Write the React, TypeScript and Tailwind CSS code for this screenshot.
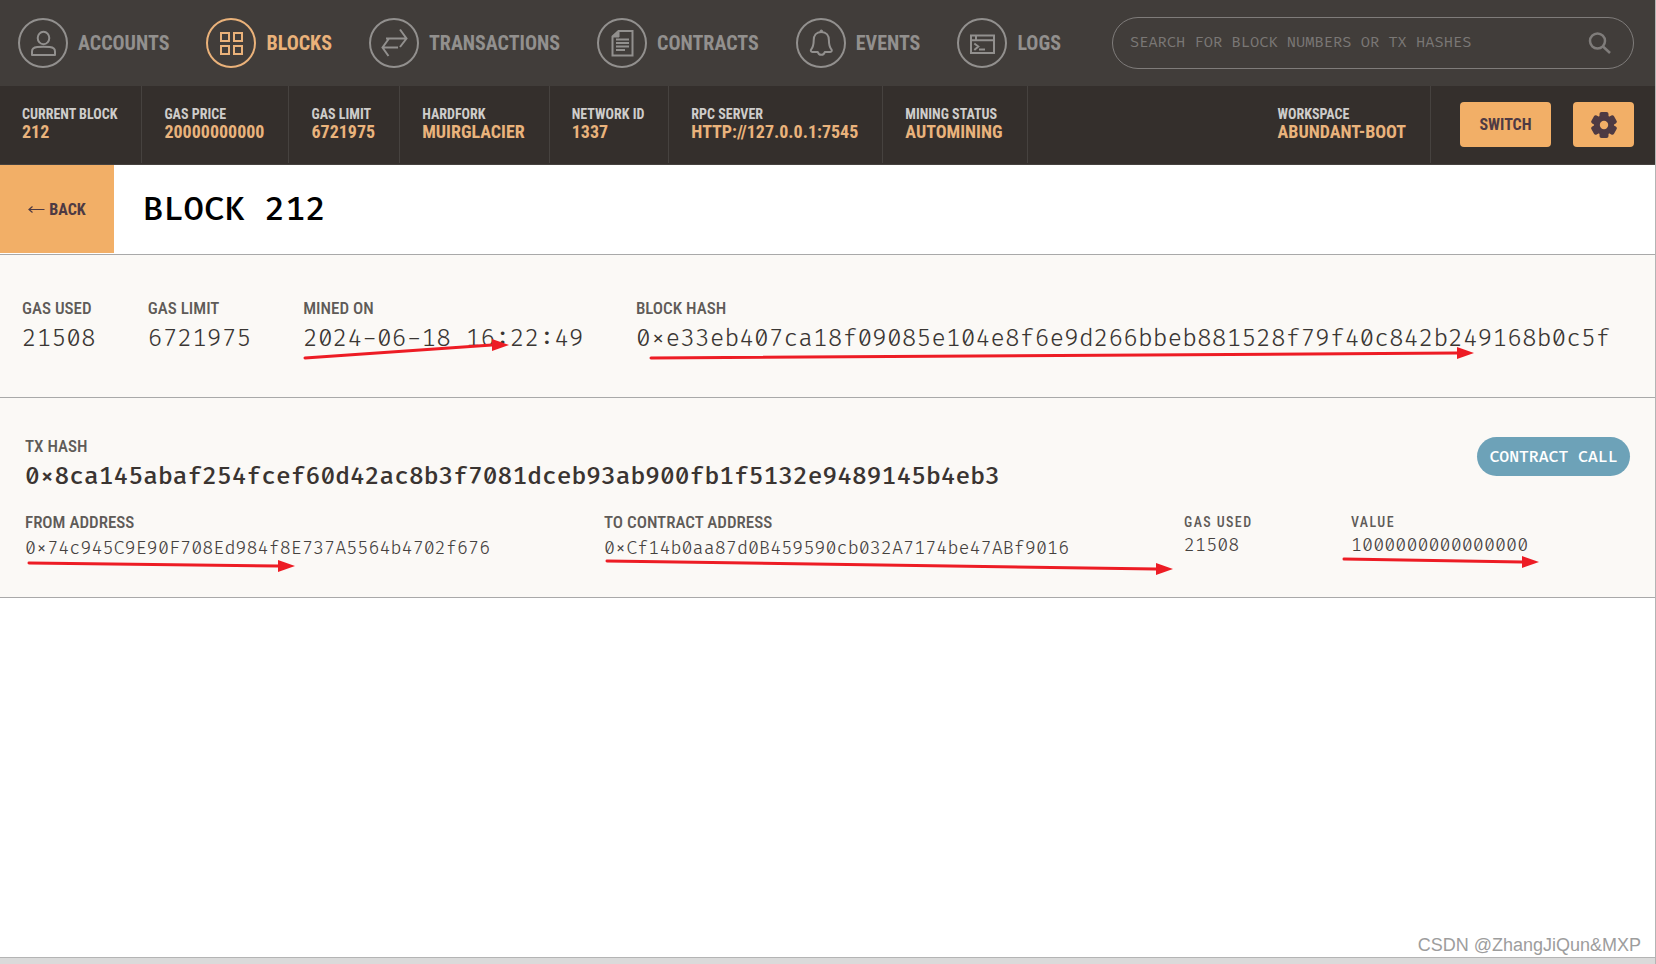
import React, { ReactNode } from "react";
import clsx from "clsx";

const sans = "font-['Roboto_Condensed','Liberation_Sans_Narrow',Roboto,sans-serif]";
const mono = "font-['Fira_Code','Fira_Mono','Noto_Sans_Mono','DejaVu_Sans_Mono',monospace]";
const fieldLabel = "text-[17px] leading-6 font-medium text-[#5f5b58]";

function TabIcon({ children }: { children: ReactNode }) {
  return (
    <svg viewBox="2 2 46 46" className="size-full" fill="none" stroke="currentColor" strokeWidth="2">
      {children}
    </svg>
  );
}

const tabs: { label: string; icon: ReactNode; active?: boolean }[] = [
  {
    label: "ACCOUNTS",
    icon: (
      <>
        <ellipse cx="25.5" cy="20" rx="5.8" ry="6.2" />
        <path d="M14 37v-3.500c0-3 2-4 5.200-4.400 4-.5 8.600-.5 12.600 0 3.200.4 5.200 1.400 5.200 4.400V37z" strokeLinejoin="round" />
      </>
    ),
  },
  {
    label: "BLOCKS",
    active: true,
    icon: <path d="M15 15h8v8h-8zM28 15h8v8h-8zM15 28h8v8h-8zM28 28h8v8h-8z" />,
  },
  {
    label: "TRANSACTIONS",
    icon: <path d="M17 20.500h20.500M31 11.500l6.500 9-6.500 8.500M29 29.500H13.500M20 20.500l-6.500 9 6 8.500" />,
  },
  {
    label: "CONTRACTS",
    icon: (
      <>
        <path d="M21.500 13H35.500v24.500H15.500V18.500z" />
        <path d="M15.500 19l6.500-6.500V19z" fill="currentColor" strokeWidth="1" />
        <path d="M19 21.500h13M19 25h13M19 28.500h13M19 32h9" strokeWidth="1.800" />
      </>
    ),
  },
  {
    label: "EVENTS",
    icon: (
      <>
        <path
          d="M25.300 14c-5.200 0-7.600 3.600-7.600 8.200 0 5.600-.9 7.200-2.500 9.300-.9 1.100-.3 2.400 1.200 2.400h5.400c.5 2 1.600 2.900 3.500 2.900s3-.9 3.500-2.900h5.400c1.500 0 2.100-1.300 1.200-2.400-1.600-2.100-2.500-3.700-2.500-9.300 0-4.600-2.400-8.200-7.600-8.200z"
          strokeLinejoin="round"
        />
        <circle cx="25.3" cy="13.3" r="1.300" fill="currentColor" strokeWidth="1" />
      </>
    ),
  },
  {
    label: "LOGS",
    icon: <path d="M14 17.500h23V35H14zM14 22.300h23M19 17.500v4.800M17.300 25.500l4 3-4 3.500M22 31.500h6" />,
  },
];

const status = [
  ["CURRENT BLOCK", "212"],
  ["GAS PRICE", "20000000000"],
  ["GAS LIMIT", "6721975"],
  ["HARDFORK", "MUIRGLACIER"],
  ["NETWORK ID", "1337"],
  ["RPC SERVER", "HTTP://127.0.0.1:7545"],
  ["MINING STATUS", "AUTOMINING"],
];

const gearTeeth = [0, 60, 120];

function StatusItem({ label, value }: { label: string; value: string }) {
  return (
    <div className="flex h-[77px] flex-col border-r border-[#46423f] pt-5 pr-6 pl-[22px] font-bold whitespace-nowrap">
      <span className="text-[14px] leading-4 text-[#cfcdcb]">{label}</span>
      <span className="text-[18px] leading-5 text-[#e9b37c]">{value}</span>
    </div>
  );
}

function Arrow({ x, y, length, rise }: { x: number; y: number; length: number; rise: number }) {
  const base = length - 17;
  return (
    <svg className="pointer-events-none absolute top-0 left-0 size-px overflow-visible" aria-hidden="true">
      <g transform={`translate(${x} ${y})`} fill="#ed1c24" stroke="#ed1c24">
        <path d={`M0 0L${base} ${-rise}`} strokeWidth="3" strokeLinecap="round" />
        <path d={`M${base} ${-rise - 6}L${length} ${-rise}L${base} ${-rise + 6}Z`} stroke="none" />
      </g>
    </svg>
  );
}

function Summary({ label, value, children }: { label: string; value: string; children?: ReactNode }) {
  return (
    <div className="relative whitespace-nowrap">
      <dt className={fieldLabel}>{label}</dt>
      <dd className={clsx(mono, "text-[24px] leading-[38px] font-light text-[#3a3633]")}>{value}</dd>
      {children}
    </div>
  );
}

function Address({ label, value, children }: { label: string; value: string; children: ReactNode }) {
  return (
    <div className="relative">
      <dt className={fieldLabel}>{label}</dt>
      <dd className={clsx(mono, "text-[18px] leading-[30px] font-light text-[#45413e]")}>{value}</dd>
      {children}
    </div>
  );
}

function Amount({ label, value, children }: { label: string; value: string; children?: ReactNode }) {
  return (
    <div className="relative">
      <dt className="text-[14px] leading-6 font-medium tracking-widest text-[#5f5b58]">{label}</dt>
      <dd className={clsx(mono, "text-[18px] leading-6 font-light text-[#45413e]")}>{value}</dd>
      {children}
    </div>
  );
}

export default function App() {
  return (
    <div className={clsx(sans, "flex min-h-screen flex-col border-r border-[#b4b4b4] bg-white")}>
      <header>
        <nav className="flex h-[86px] items-center bg-[#413d3a] pr-[21px] pl-[18px]">
          <div className="flex gap-[37px]">
            {tabs.map((t) => (
              <a
                key={t.label}
                href="#"
                className={clsx("flex items-center gap-[10px] text-[20px] font-bold", t.active ? "text-[#eab27a]" : "text-[#92908e]")}
              >
                <span className="size-[50px] rounded-full border-2 border-current">
                  <TabIcon>{t.icon}</TabIcon>
                </span>
                {t.label}
              </a>
            ))}
          </div>
          <label className="ml-[51px] flex h-[52px] grow items-center rounded-full border border-[#7f7c7a] pr-[22px] pl-[17px]">
            <input
              aria-label="Search"
              placeholder="SEARCH FOR BLOCK NUMBERS OR TX HASHES"
              className={clsx(mono, "min-w-0 grow bg-transparent pt-px text-[15px] outline-none placeholder:text-[#7a7775]")}
            />
            <svg viewBox="0 0 24 24" className="size-6" fill="none" stroke="#7f7c7a" strokeWidth="2.500">
              <circle cx="10.500" cy="10" r="7.500" />
              <path d="M16 15.500l7 6.500" />
            </svg>
          </label>
        </nav>
        <div className="flex h-[79px] border-b border-[#46423f] bg-[#342f2c]">
          {status.map(([l, v]) => (
            <StatusItem key={l} label={l} value={v} />
          ))}
          <div className="ml-auto">
            <StatusItem label="WORKSPACE" value="ABUNDANT-BOOT" />
          </div>
          <div className="flex items-start gap-[22px] pt-4 pr-[21px] pl-[29px]">
            <button className="h-[45px] w-[91px] rounded bg-[#f2af67] text-[16px] font-bold text-[#4e3a43]">SWITCH</button>
            <button aria-label="Settings" className="flex h-[45px] w-[61px] items-center justify-center rounded bg-[#f2af67]">
              <svg viewBox="-13 -13 26 26" className="size-[26px]" fill="#4e3a43">
                <circle r="10" />
                {gearTeeth.map((a) => (
                  <rect key={a} x="-4.500" y="-13" width="9" height="26" rx="2" transform={`rotate(${a})`} />
                ))}
                <circle r="4.200" fill="#f2af67" />
              </svg>
            </button>
          </div>
        </div>
      </header>

      <main className="grow">
        <div className="flex h-[90px] border-b border-[#a9a9a9] pb-px">
          <button className="flex w-[114px] items-center justify-center gap-1 bg-[#f2af67] pt-px text-[16px] font-bold text-[#4e3a43]">
            <svg viewBox="0 0 17 10" className="h-[10px] w-[17px]" fill="none" stroke="currentColor" strokeWidth="1.200">
              <path d="M.800 4.500H16.500M4.500 1.500L1 4.500 4.500 7.500" />
            </svg>
            BACK
          </button>
          <h1 className={clsx(mono, "self-center pt-1 pl-[29px] text-[33px] font-medium text-black")}>BLOCK 212</h1>
        </div>

        <dl className="flex h-[143px] gap-[52px] border-b border-[#a9a9a9] bg-[#fbf9f6] pt-[41px] pl-[22px]">
          <Summary label="GAS USED" value="21508" />
          <Summary label="GAS LIMIT" value="6721975" />
          <Summary label="MINED ON" value="2024-06-18 16:22:49">
            <Arrow x={2} y={62} length={204} rise={13} />
          </Summary>
          <Summary label="BLOCK HASH" value="0×e33eb407ca18f09085e104e8f6e9d266bbeb881528f79f40c842b249168b0c5f">
            <Arrow x={15} y={62} length={823} rise={5} />
          </Summary>
        </dl>

        <section className="h-[200px] border-b border-[#a9a9a9] bg-[#fbf9f6] px-[25px] pt-9 whitespace-nowrap">
          <div className="flex items-start justify-between">
            <div>
              <div className={fieldLabel}>TX HASH</div>
              <div className={clsx(mono, "text-[24px] leading-[38px] font-medium text-[#3a3431]")}>
                0×8ca145abaf254fcef60d42ac8b3f7081dceb93ab900fb1f5132e9489145b4eb3
              </div>
            </div>
            <span className={clsx(mono, "mt-[3px] flex h-[39px] w-[153px] items-center justify-center rounded-full bg-[#6da2b8] text-[16px] font-medium text-white")}>
              CONTRACT CALL
            </span>
          </div>
          <dl className="mt-[14px] grid grid-cols-[579px_580px_167px_1fr]">
            <Address label="FROM ADDRESS" value="0×74c945C9E90F708Ed984f8E737A5564b4702f676">
              <Arrow x={4} y={53} length={266} rise={-3} />
            </Address>
            <Address label="TO CONTRACT ADDRESS" value="0×Cf14b0aa87d0B459590cb032A7174be47ABf9016">
              <Arrow x={3} y={51} length={566} rise={-8} />
            </Address>
            <Amount label="GAS USED" value="21508" />
            <Amount label="VALUE" value="1000000000000000">
              <Arrow x={-7} y={49} length={195} rise={-3} />
            </Amount>
          </dl>
        </section>
      </main>

      <footer>
        <p className="pr-[14px] text-right font-['Liberation_Sans',Arial,sans-serif] text-[18px] leading-6 text-[#9d9d9d]">
          CSDN @ZhangJiQun&amp;MXP
        </p>
        <div className="h-[7px] border-t border-[#b4b4b4] bg-[#dadada]" />
      </footer>
    </div>
  );
}
